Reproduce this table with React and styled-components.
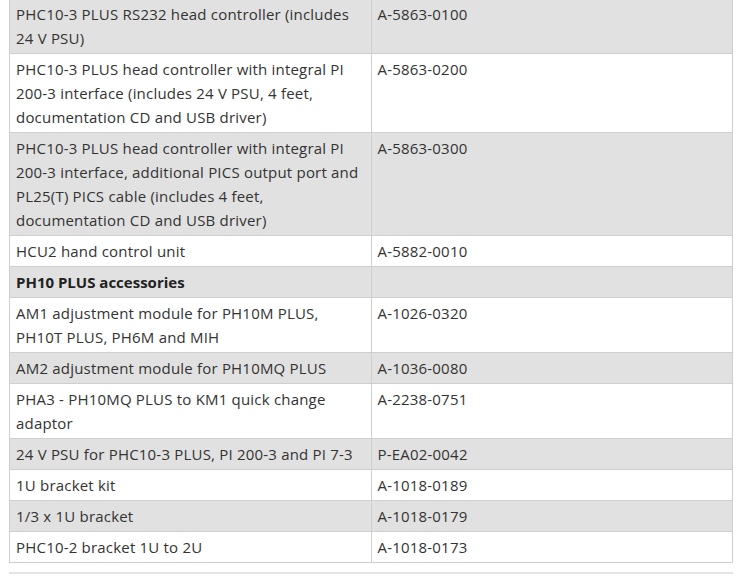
import React from 'react';
import styled, { createGlobalStyle } from 'styled-components';

const GlobalStyle = createGlobalStyle`
  body {
    margin: 0;
    background: #fff;
    font-family: "Open Sans", "Noto Sans", sans-serif;
  }
`;

// 부품 목록 데이터
const rows = [
  { name: 'PHC10-3 PLUS RS232 head controller (includes 24 V PSU)', code: 'A-5863-0100' },
  { name: 'PHC10-3 PLUS head controller with integral PI 200-3 interface (includes 24 V PSU, 4 feet, documentation CD and USB driver)', code: 'A-5863-0200' },
  { name: 'PHC10-3 PLUS head controller with integral PI 200-3 interface, additional PICS output port and PL25(T) PICS cable (includes 4 feet, documentation CD and USB driver)', code: 'A-5863-0300' },
  { name: 'HCU2 hand control unit', code: 'A-5882-0010' },
  { name: 'PH10 PLUS accessories', code: '', heading: true },
  { name: 'AM1 adjustment module for PH10M PLUS, PH10T PLUS, PH6M and MIH', code: 'A-1026-0320' },
  { name: 'AM2 adjustment module for PH10MQ PLUS', code: 'A-1036-0080' },
  { name: 'PHA3 - PH10MQ PLUS to KM1 quick change adaptor', code: 'A-2238-0751' },
  { name: '24 V PSU for PHC10-3 PLUS, PI 200-3 and PI 7-3', code: 'P-EA02-0042' },
  { name: '1U bracket kit', code: 'A-1018-0189' },
  { name: '1/3 x 1U bracket', code: 'A-1018-0179' },
  { name: 'PHC10-2 bracket 1U to 2U', code: 'A-1018-0173' },
];

const App = () => {
  return (
    <Page>
      <GlobalStyle />
      <Table>
        <tbody>
          {rows.map((r, i) => (
            <Row key={i}>
              <Cell>{r.heading ? <strong>{r.name}</strong> : r.name}</Cell>
              <Cell>{r.code}</Cell>
            </Row>
          ))}
        </tbody>
      </Table>
      <Rule />
    </Page>
  );
};

const Page = styled.div`
  padding: 0 9px;
  margin-top: -2px;
`;

const Table = styled.table`
  width: 100%;
  border-collapse: collapse;
  table-layout: fixed;
  border: 1px solid #cfcfcf;
`;

const Row = styled.tr`
  background: #fff;
  &:nth-child(odd) {
    background: #e1e1e1;
  }
`;

const Cell = styled.td`
  width: 50%;
  vertical-align: top;
  padding: 3px 6px;
  border: 1px solid #cfcfcf;
  font-size: 15px;
  letter-spacing: 0.2px;
  line-height: 24px;
  color: #333;
  strong {
    font-weight: 700;
    letter-spacing: 0;
    color: #222;
  }
`;

const Rule = styled.div`
  margin-top: 9px;
  height: 2px;
  background: #e4e4e4;
`;

export default App;
